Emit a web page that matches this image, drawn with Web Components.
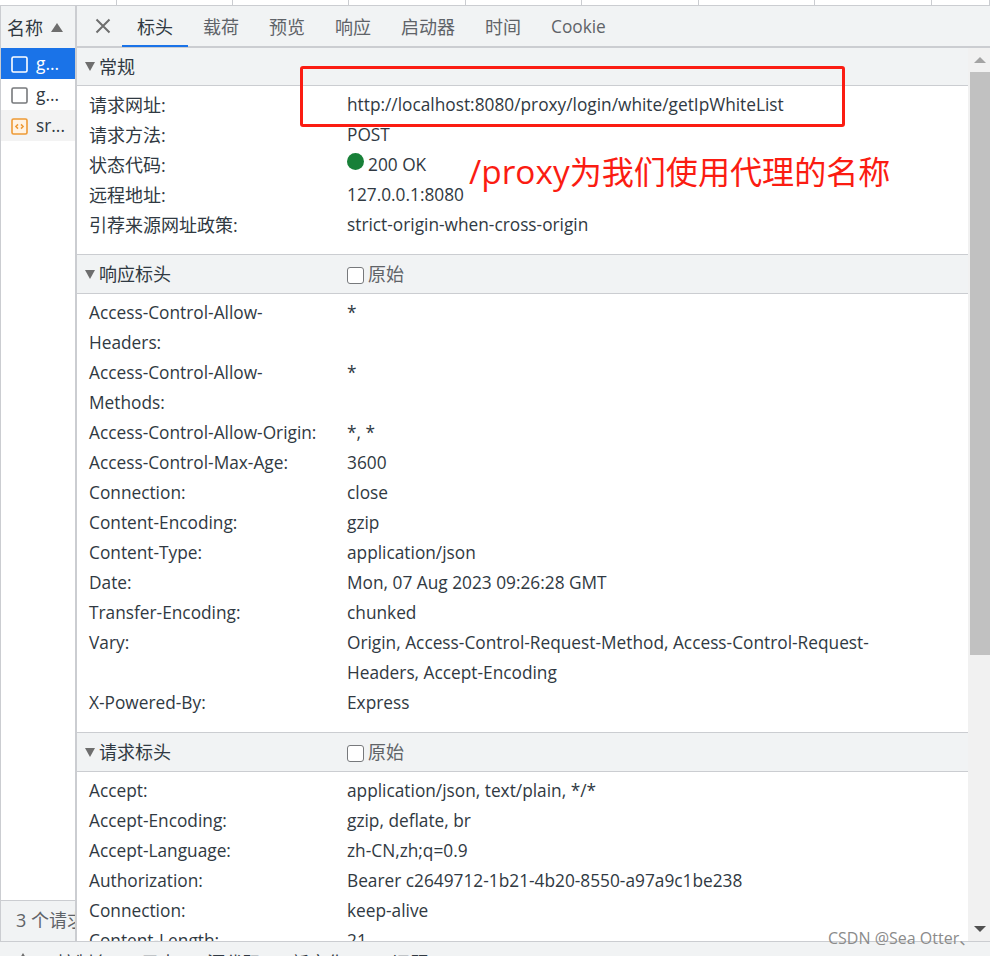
<!DOCTYPE html>
<html>
<head>
<meta charset="utf-8">
<title>network</title>
<style>
    html, body { margin: 0; padding: 0; background: #fff; }
    body {
        width: 990px;
        height: 956px;
        overflow: hidden;
        position: relative;
        font-family: "Open Sans", "Noto Sans CJK SC", sans-serif;
        font-size: 17.3px;
        color: #303942;
    }
</style>
</head>
<body>
<devtools-panel></devtools-panel>
<script>
const CJK = `"Open Sans", "Noto Sans CJK SC", sans-serif`;

class TopStrip extends HTMLElement {
    constructor() {
        super();
        this.attachShadow({ mode: "open" });
        const cells = [117, 116, 116, 117, 116, 117, 116, 117, 58];
        this.shadowRoot.innerHTML = `
            <style>
                :host { display: flex; height: 5px; border-bottom: 1px solid #cbcdd1; background: #fff; box-sizing: content-box; }
                i { display: block; height: 5px; border-right: 1px solid #cbcdd1; box-sizing: border-box; }
            </style>
            ${cells.map((w) => `<i style="width:${w}px"></i>`).join("")}
        `;
    }
}

class RequestItem extends HTMLElement {
    constructor() {
        super();
        this.attachShadow({ mode: "open" });
        const kind = this.getAttribute("kind");
        const icon = kind === "script"
            ? `<svg width="18" height="18" viewBox="0 0 18 18"><rect x="1" y="1" width="15" height="15" rx="1.5" fill="#fff3e4" stroke="#ee9a35" stroke-width="1.6"/><path d="M7 6.4 4.9 8.5 7 10.6M10 6.4l2.1 2.1-2.1 2.1" fill="none" stroke="#ee9a35" stroke-width="1.5"/></svg>`
            : `<svg width="18" height="18" viewBox="0 0 18 18"><rect x="1" y="1" width="15" height="15" rx="1.5" fill="none" stroke="${kind === "selected" ? "#fff" : "#77797c"}" stroke-width="1.6"/></svg>`;
        this.shadowRoot.innerHTML = `
            <style>
                :host { display: flex; align-items: center; gap: 7px; height: 31px; padding-left: 10px; box-sizing: border-box; overflow: hidden; white-space: nowrap; }
                :host([kind="selected"]) { background: #1a73e8; color: #fff; }
                :host([kind="script"]) { background: #f3f3f3; }
                svg { flex: none; margin-top: 2px; }
            </style>
            ${icon}<slot></slot>
        `;
    }
}

class SidePane extends HTMLElement {
    constructor() {
        super();
        this.attachShadow({ mode: "open" });
        this.shadowRoot.innerHTML = `
            <style>
                :host { display: flex; flex-direction: column; width: 75px; flex: none; border-right: 2px solid #cbcdd1; box-sizing: content-box; background: #fff; }
                .head { display: flex; align-items: center; gap: 8px; height: 42px; padding-left: 6px; background: #f1f3f4; box-sizing: border-box; flex: none; border-left: 1px solid #cbcdd1; font-size: 18px; }
                .list { flex: 1; border-left: 1px solid #cbcdd1; }
                .foot { height: 41px; flex: none; background: #f1f3f4; border-top: 1px solid #cbcdd1; border-left: 1px solid #cbcdd1; box-sizing: border-box; padding: 5px 0 0 15px; color: #5f6368; white-space: nowrap; overflow: hidden; font-size: 18px; }
                .up { width: 0; height: 0; border: 6px solid transparent; border-top: 0; border-bottom: 9px solid #6e6e6e; }
            </style>
            <div class="head"><span>名称</span><span class="up"></span></div>
            <div class="list">
                <request-item kind="selected">g...</request-item>
                <request-item kind="plain">g...</request-item>
                <request-item kind="script">sr...</request-item>
            </div>
            <div class="foot">3 个请求</div>
        `;
    }
}

class TabBar extends HTMLElement {
    constructor() {
        super();
        this.attachShadow({ mode: "open" });
        const tabs = ["标头", "载荷", "预览", "响应", "启动器", "时间", "Cookie"];
        this.shadowRoot.innerHTML = `
            <style>
                :host { display: flex; align-items: stretch; height: 40px; background: #f1f3f4; border-bottom: 2px solid #cbcdd1; box-sizing: content-box; padding-left: 18px; flex: none; font-size: 18px; }
                svg { align-self: center; margin-right: 11px; }
                .tab { display: flex; align-items: center; padding: 0 15px; color: #5f6368; border-bottom: 2px solid transparent; margin-bottom: -1px; }
                .tab.on { color: #303942; border-bottom-color: #1a73e8; }
                .tab.en { font-size: 17.3px; padding-top: 2px; box-sizing: border-box; }
            </style>
            <svg width="16" height="16" viewBox="0 0 16 16"><path d="M1.5 1.5l13 13M14.5 1.5l-13 13" stroke="#6e6e6e" stroke-width="2" fill="none"/></svg>
            ${tabs.map((t, i) => `<div class="tab${i === 0 ? " on" : ""}${t === "Cookie" ? " en" : ""}">${t}</div>`).join("")}
        `;
    }
}

class HeaderSection extends HTMLElement {
    constructor() {
        super();
        this.attachShadow({ mode: "open" });
        const raw = this.hasAttribute("raw")
            ? `<span class="raw"><i></i>原始</span>`
            : "";
        this.shadowRoot.innerHTML = `
            <style>
                :host { display: block; }
                .title { display: flex; align-items: center; height: 36px; padding-bottom: 2px; background: #f1f3f4; border-top: 1px solid #cbcdd1; border-bottom: 1px solid #cbcdd1; padding-left: 8px; position: relative; font-size: 18px; }
                :host([first]) .title { border-top: 0; height: 35px; }
                .tri { width: 0; height: 0; border: 5.5px solid transparent; border-bottom: 0; border-top: 9px solid #6e6e6e; margin-right: 4px; margin-top: 2px; }
                .raw { position: absolute; left: 270px; top: 0; bottom: 2px; display: flex; align-items: center; gap: 4px; color: #5f6368; }
                .raw i { display: block; width: 17px; height: 17px; box-sizing: border-box; border: 1.5px solid #77797c; border-radius: 3px; background: #fff; margin-top: 4px; }
                .rows { padding: 4px 0 14px; }
            </style>
            <div class="title"><span class="tri"></span><span>${this.getAttribute("title")}</span>${raw}</div>
            <div class="rows"><slot></slot></div>
        `;
    }
}

class HeaderRow extends HTMLElement {
    constructor() {
        super();
        this.attachShadow({ mode: "open" });
        const key = this.getAttribute("k");
        const isCjk = /[\u4e00-\u9fff]/.test(key);
        this.shadowRoot.innerHTML = `
            <style>
                :host { display: grid; grid-template-columns: 258px 1fr; padding-left: 12px; line-height: 30px; padding-right: 86px; }
                .k { padding-right: 20px; }
                .k.cjk { font-size: 18px; padding-right: 0; white-space: nowrap; }
                .v { color: #303942; }
            </style>
            <div class="k${isCjk ? " cjk" : ""}">${key}</div>
            <div class="v"><slot></slot></div>
        `;
    }
}

class StatusDot extends HTMLElement {
    constructor() {
        super();
        this.attachShadow({ mode: "open" });
        this.shadowRoot.innerHTML = `
            <style>
                :host { display: inline-block; width: 17px; height: 17px; border-radius: 50%; background: #188038; margin-right: 4px; vertical-align: 1px; }
            </style>
        `;
    }
}

class DevtoolsPanel extends HTMLElement {
    constructor() {
        super();
        this.attachShadow({ mode: "open" });
        const row = (k, v) => `<header-row k="${k}">${v}</header-row>`;
        this.shadowRoot.innerHTML = `
            <style>
                :host { display: flex; flex-direction: column; height: 956px; font-family: ${CJK}; font-size: 17.3px; color: #303942; position: relative; overflow: hidden; }
                .main { display: flex; height: 935px; flex: none; }
                .detail { display: flex; flex-direction: column; flex: 1; min-width: 0; }
                .body { display: flex; flex: 1; min-height: 0; }
                .scroll { flex: 1; min-width: 0; overflow: hidden; }
                .bar { width: 22px; flex: none; background: #f1f1f1; display: flex; flex-direction: column; align-items: flex-end; }
                .btn { width: 20px; height: 24px; flex: none; display: flex; align-items: center; justify-content: center; }
                .thumb { width: 20px; height: 583px; background: #c1c1c1; flex: none; }
                .sp { flex: 1; }
                .ua { width: 0; height: 0; border: 6px solid transparent; border-top: 0; border-bottom: 6px solid #a3a3a3; }
                .da { width: 0; height: 0; border: 6px solid transparent; border-bottom: 0; border-top: 6px solid #505050; }
                .drawer { height: 15px; flex: none; border-top: 1px solid #cbcdd1; background: #f1f3f4; box-sizing: border-box; overflow: hidden; display: flex; padding-top: 9px; font-size: 18px; line-height: 24px; white-space: nowrap; }
                .drawer .arr { flex: none; width: 0; height: 0; margin: 2px 31px 0 20px; border: 3.5px solid transparent; border-top: 0; border-bottom: 5px solid #6e6e6e; }
                .dtabs { display: flex; gap: 30px; }
                .dtabs .last { margin-left: 17px; }
                .note { position: absolute; left: 300px; top: 66px; width: 545px; height: 61px; box-sizing: border-box; border: 3px solid #fb1c12; border-radius: 3px; }
                .say { position: absolute; left: 469px; top: 149px; font-size: 32.1px; line-height: 44px; color: #fb1c12; white-space: nowrap; }
                .say span { font-size: 33.4px; }
                .mark { position: absolute; left: 828px; top: 926px; font-size: 16px; line-height: 24px; color: #8b8b8b; white-space: nowrap; }
            </style>
            <top-strip></top-strip>
            <div class="main">
                <side-pane></side-pane>
                <div class="detail">
                    <tab-bar></tab-bar>
                    <div class="body">
                        <div class="scroll">
                            <header-section first title="常规">
                                ${row("请求网址:", "http://localhost:8080/proxy/login/white/getIpWhiteList")}
                                ${row("请求方法:", "POST")}
                                ${row("状态代码:", "<status-dot></status-dot>200 OK")}
                                ${row("远程地址:", "127.0.0.1:8080")}
                                ${row("引荐来源网址政策:", "strict-origin-when-cross-origin")}
                            </header-section>
                            <header-section raw title="响应标头">
                                ${row("Access-Control-Allow-Headers:", "*")}
                                ${row("Access-Control-Allow-Methods:", "*")}
                                ${row("Access-Control-Allow-Origin:", "*, *")}
                                ${row("Access-Control-Max-Age:", "3600")}
                                ${row("Connection:", "close")}
                                ${row("Content-Encoding:", "gzip")}
                                ${row("Content-Type:", "application/json")}
                                ${row("Date:", "Mon, 07 Aug 2023 09:26:28 GMT")}
                                ${row("Transfer-Encoding:", "chunked")}
                                ${row("Vary:", "Origin, Access-Control-Request-Method, Access-Control-Request-Headers, Accept-Encoding")}
                                ${row("X-Powered-By:", "Express")}
                            </header-section>
                            <header-section raw title="请求标头">
                                ${row("Accept:", "application/json, text/plain, */*")}
                                ${row("Accept-Encoding:", "gzip, deflate, br")}
                                ${row("Accept-Language:", "zh-CN,zh;q=0.9")}
                                ${row("Authorization:", "Bearer c2649712-1b21-4b20-8550-a97a9c1be238")}
                                ${row("Connection:", "keep-alive")}
                                ${row("Content-Length:", "21")}
                            </header-section>
                        </div>
                        <div class="bar">
                            <div class="btn"><span class="ua"></span></div>
                            <div class="thumb"></div>
                            <div class="sp"></div>
                            <div class="btn"><span class="da"></span></div>
                        </div>
                    </div>
                </div>
            </div>
            <div class="drawer"><span class="arr"></span><div class="dtabs"><span>控制台</span><span>元素</span><span>源代码</span><span>新变化</span><span class="last">问题</span></div></div>
            <div class="note"></div>
            <div class="say"><span>/proxy</span>为我们使用代理的名称</div>
            <div class="mark">CSDN @Sea Otter、</div>
        `;
    }
}

customElements.define("top-strip", TopStrip);
customElements.define("request-item", RequestItem);
customElements.define("side-pane", SidePane);
customElements.define("tab-bar", TabBar);
customElements.define("header-section", HeaderSection);
customElements.define("header-row", HeaderRow);
customElements.define("status-dot", StatusDot);
customElements.define("devtools-panel", DevtoolsPanel);
</script>
</body>
</html>
